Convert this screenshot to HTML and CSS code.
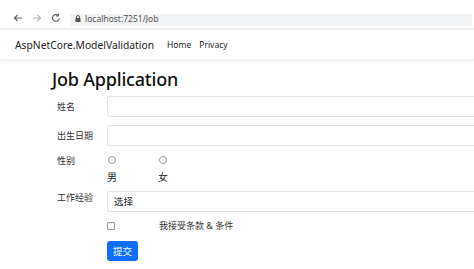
FILE: index.html
```html
<!DOCTYPE html>
<html lang="zh">
<head>
<meta charset="utf-8">
<title>Job Application</title>
<link rel="stylesheet" href="styles.css">
</head>
<body>
<div class="chrome">
  <div class="chrome-row">
    <div class="nav-icons">
      <svg class="ic" width="10" height="10" viewBox="0 0 10 10"><path d="M9 5H1.5M4.5 2L1.5 5l3 3" fill="none" stroke="#666" stroke-width="1.2"/></svg>
      <svg class="ic" width="10" height="10" viewBox="0 0 10 10"><path d="M1 5h7.5M5.5 2l3 3-3 3" fill="none" stroke="#bbb" stroke-width="1.2"/></svg>
      <svg class="ic" width="10" height="10" viewBox="0 0 10 10"><path d="M8.3 5.2A3.4 3.4 0 1 1 7 2.3M7.3 0.6V2.8H5.1" fill="none" stroke="#666" stroke-width="1.2"/></svg>
    </div>
    <div class="address">
      <svg class="lock" width="6" height="7" viewBox="0 0 6 7"><rect x="0.5" y="3" width="5" height="4" fill="#555"/><path d="M1.5 3V2a1.5 1.5 0 0 1 3 0v1" fill="none" stroke="#555"/></svg>
      <span class="url">localhost:7251/Job</span>
    </div>
  </div>
</div>
<header class="navbar">
  <span class="brand">AspNetCore.ModelValidation</span>
  <nav class="links"><a href="#">Home</a><a href="#">Privacy</a></nav>
</header>
<main class="main">
  <h1 class="title">Job Application</h1>
  <form class="form">
    <div class="row">
      <label class="lbl">姓名</label>
      <div class="input"></div>
    </div>
    <div class="row">
      <label class="lbl">出生日期</label>
      <div class="input"></div>
    </div>
    <div class="row row-radio">
      <label class="lbl">性别</label>
      <div class="radios">
        <div class="radio"><span class="circle"></span><span class="rtext">男</span></div>
        <div class="radio"><span class="circle"></span><span class="rtext">女</span></div>
      </div>
    </div>
    <div class="row row-select">
      <label class="lbl">工作经验</label>
      <div class="input select">选择</div>
    </div>
    <div class="row row-check">
      <span></span>
      <div class="check"><span class="box"></span><span class="ctext">我接受条款 &amp; 条件</span></div>
    </div>
    <div class="row row-btn">
      <span></span>
      <div><button type="button" class="btn">提交</button></div>
    </div>
  </form>
</main>
</body>
</html>
```
FILE: styles.css
```css
* { box-sizing: border-box; }
html, body { margin: 0; padding: 0; background: #fff; overflow: hidden; }
body {
  width: 474px;
  height: 269px;
  font-family: "Noto Sans", "Noto Sans CJK SC", sans-serif;
  color: #212529;
}
.chrome {
  height: 30px;
  padding-top: 14px;
  border-bottom: 2px solid #eef0f2;
}
.chrome-row {
  height: 12px;
  display: flex;
  align-items: flex-start;
}
.nav-icons {
  display: flex;
  gap: 9px;
  padding-left: 13px;
  width: 70px;
  margin-top: -1px;
}
.ic { display: block; }
.address {
  flex: 1;
  height: 12px;
  margin-right: 2px;
  background: #f1f3f4;
  display: flex;
  align-items: flex-start;
  gap: 4px;
  padding-left: 5px;
}
.lock { margin-top: 1px; }
.url {
  font-size: 8.5px;
  line-height: 10px;
  color: #555;
}
.navbar {
  height: 30px;
  display: flex;
  align-items: center;
  padding-left: 15px;
  box-shadow: 0 2px 3px rgba(0,0,0,0.05);
  border-bottom: 1px solid #f0f0f0;
}
.brand {
  font-size: 10.3px;
  color: #222;
  margin-right: 13px;
}
.links { display: flex; gap: 8px; }
.links a {
  font-size: 8.5px;
  color: #222;
  text-decoration: none;
}
.main { padding-left: 52px; padding-top: 6px; }
.title {
  margin: 0 0 4px;
  font-size: 18px;
  font-weight: 500;
  letter-spacing: -0.2px;
  line-height: 26px;
  color: #111;
}
.form { display: flex; flex-direction: column; }
.row {
  display: grid;
  grid-template-columns: 55px 1fr;
  align-items: center;
  margin-bottom: 8px;
}
.lbl {
  padding-left: 5px;
  font-size: 9px;
  color: #333;
}
.input {
  height: 21px;
  border: 1px solid #e3e5e8;
  border-right: none;
  border-radius: 3px 0 0 3px;
  background: #fff;
}
.row-radio { align-items: start; margin-bottom: 7px; }
.radios { display: flex; }
.radio { width: 51px; display: flex; flex-direction: column; align-items: flex-start; }
.circle {
  width: 8px; height: 8px;
  border: 1px solid #999;
  border-radius: 50%;
  margin-left: 0.5px;
  margin-top: 2px;
}
.rtext { font-size: 10px; margin-top: 5px; }
.row-select { align-items: start; margin-bottom: 7px; }
.select {
  font-size: 9.5px;
  padding-left: 6px;
  line-height: 19px;
}
.row-check { margin-bottom: 9px; }
.check { display: flex; align-items: center; }
.box {
  width: 8px; height: 8px;
  border: 1px solid #999;
  border-radius: 1px;
  margin-right: 44px;
}
.ctext { font-size: 9px; color: #333; }
.btn {
  display: block;
  width: 31px;
  height: 20px;
  background: #0d6efd;
  border: none;
  border-radius: 3px;
  color: #fff;
  font-family: inherit;
  font-size: 9.5px;
  padding: 0;
}
```
